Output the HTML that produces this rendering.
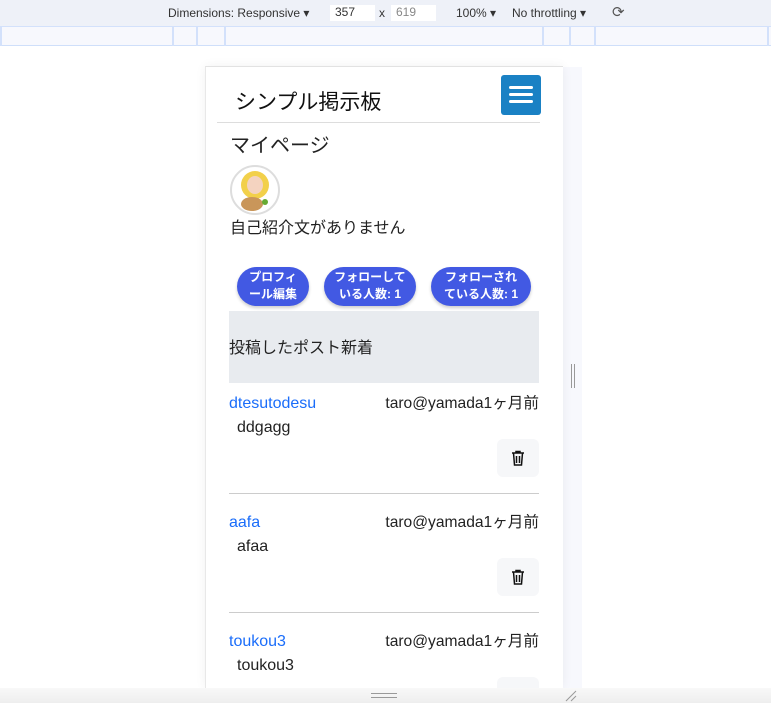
<!DOCTYPE html>
<html><head><meta charset="utf-8">
<style>
*{margin:0;padding:0;box-sizing:border-box}
body{width:771px;height:703px;overflow:hidden;background:#fff;font-family:"Liberation Sans","Noto Sans CJK JP",sans-serif;position:relative;color:#222}
.abs{position:absolute}
.tb{left:0;top:0;width:771px;height:26px;background:#eef1f8;font-size:12px;color:#333}
.ruler{left:0;top:26px;width:771px;height:20px;background:#f7f8fd;border-top:1px solid #d3e1fb;border-bottom:1px solid #cfdffa}
.rl{top:26px;width:2px;height:20px;background:#d3e1fb}
.frame{left:205px;top:66px;width:358px;height:622px;background:#fff;border-top:1px solid #e2e2e2;border-left:1px solid #e8e8e8;box-shadow:0 0 10px rgba(0,0,0,.06);overflow:hidden}
.side{left:563px;top:67px;width:19px;height:621px;background:#f7f8fd}
.btn{background:#4259e3;color:#fff;border-radius:20px;font-size:12px;font-weight:bold;text-align:center;line-height:17px;height:39px;padding-top:2px;box-shadow:0 2px 3px rgba(0,0,0,.2)}
.user{color:#1a6dfa;font-size:16px;line-height:20px}
.t16{font-size:16px;line-height:20px}
.r{right:24px;text-align:right;font-size:15.6px}
.del{width:42px;height:38px;background:#f6f7f9;border-radius:6px}
</style></head><body>
<div class="abs tb">
 <span class="abs" style="left:168px;top:6px">Dimensions: Responsive ▾</span>
 <span class="abs" style="left:330px;top:5px;width:45px;height:16px;background:#fff;padding-left:5px">357</span>
 <span class="abs" style="left:379px;top:6px">x</span>
 <span class="abs" style="left:391px;top:5px;width:45px;height:16px;background:#fff;padding-left:5px;color:#888">619</span>
 <span class="abs" style="left:456px;top:6px">100% ▾</span>
 <span class="abs" style="left:512px;top:6px">No throttling ▾</span>
 <span class="abs" style="left:612px;top:3px;font-size:15px;color:#555">⟳</span>
</div>
<div class="abs ruler"></div>
<div class="abs rl" style="left:0"></div><div class="abs rl" style="left:172px"></div><div class="abs rl" style="left:196px"></div><div class="abs rl" style="left:224px"></div>
<div class="abs rl" style="left:542px"></div><div class="abs rl" style="left:569px"></div><div class="abs rl" style="left:594px"></div><div class="abs rl" style="left:767px"></div>
<div class="abs side"></div>
<div class="abs" style="left:571px;top:364px;width:1px;height:24px;background:#999"></div>
<div class="abs" style="left:574px;top:364px;width:1px;height:24px;background:#999"></div>
<div class="abs frame">
 <div class="abs" style="left:29px;top:19px;font-size:21px;color:#111">シンプル掲示板</div>
 <div class="abs" style="left:295px;top:8px;width:40px;height:40px;background:#1a81c4;border-radius:3px">
  <div class="abs" style="left:8px;top:11px;width:24px;height:3px;background:#fff;border-radius:2px"></div>
  <div class="abs" style="left:8px;top:18px;width:24px;height:3px;background:#fff;border-radius:2px"></div>
  <div class="abs" style="left:8px;top:25px;width:24px;height:3px;background:#fff;border-radius:2px"></div>
 </div>
 <div class="abs" style="left:11px;top:55px;width:323px;height:1px;background:#ddd"></div>
 <div class="abs" style="left:24px;top:62px;font-size:20px">マイページ</div>
 <div class="abs" style="left:24px;top:98px;width:50px;height:50px;border-radius:50%;border:2px solid #ddd;overflow:hidden;background:#fff">
  <svg width="46" height="46"><ellipse cx="23" cy="18" rx="14" ry="14" fill="#f2d04a"/><ellipse cx="23" cy="18" rx="8" ry="9" fill="#f4d3c0"/><ellipse cx="20" cy="37" rx="11" ry="7" fill="#c9965a"/><circle cx="33" cy="35" r="3" fill="#6a3"/></svg>
 </div>
 <div class="abs t16" style="left:24px;top:152px">自己紹介文がありません</div>
 <div class="abs btn" style="left:31px;top:200px;width:72px">プロフィ<br>ール編集</div>
 <div class="abs btn" style="left:118px;top:200px;width:92px">フォローして<br>いる人数: 1</div>
 <div class="abs btn" style="left:225px;top:200px;width:100px">フォローされ<br>ている人数: 1</div>
 <div class="abs" style="left:23px;top:244px;width:310px;height:72px;background:#e8ebef"></div>
 <div class="abs t16" style="left:23px;top:272px">投稿したポスト新着</div>

 <div class="abs user" style="left:23px;top:327px">dtesutodesu</div>
 <div class="abs t16 r" style="top:327px">taro@yamada1ヶ月前</div>
 <div class="abs t16" style="left:31px;top:351px">ddgagg</div>
 <div class="abs del" style="left:291px;top:372px"><svg class="abs" style="left:14px;top:11px" width="14" height="16" viewBox="0 0 14 16" fill="none" stroke="#111" stroke-width="1.5"><path d="M1 3h12M5 3V1.5h4V3M2.5 3l1 12h7l1-12M5.5 6v7M8.5 6v7"/></svg></div>
 <div class="abs" style="left:23px;top:426px;width:310px;height:1px;background:#ccc"></div>

 <div class="abs user" style="left:23px;top:446px">aafa</div>
 <div class="abs t16 r" style="top:446px">taro@yamada1ヶ月前</div>
 <div class="abs t16" style="left:31px;top:470px">afaa</div>
 <div class="abs del" style="left:291px;top:491px"><svg class="abs" style="left:14px;top:11px" width="14" height="16" viewBox="0 0 14 16" fill="none" stroke="#111" stroke-width="1.5"><path d="M1 3h12M5 3V1.5h4V3M2.5 3l1 12h7l1-12M5.5 6v7M8.5 6v7"/></svg></div>
 <div class="abs" style="left:23px;top:545px;width:310px;height:1px;background:#ccc"></div>

 <div class="abs user" style="left:23px;top:565px">toukou3</div>
 <div class="abs t16 r" style="top:565px">taro@yamada1ヶ月前</div>
 <div class="abs t16" style="left:31px;top:589px">toukou3</div>
 <div class="abs del" style="left:291px;top:610px"></div>
</div>
<div class="abs" style="left:0;top:688px;width:771px;height:15px;background:linear-gradient(#f8f8f8,#eee)"></div>
<div class="abs" style="left:371px;top:693px;width:26px;height:1px;background:#999"></div>
<div class="abs" style="left:371px;top:697px;width:26px;height:1px;background:#999"></div>
<svg class="abs" style="left:564px;top:689px" width="14" height="14"><path d="M2 12L12 2M7 12L12 7" stroke="#999" stroke-width="1"/></svg>
</body></html>
